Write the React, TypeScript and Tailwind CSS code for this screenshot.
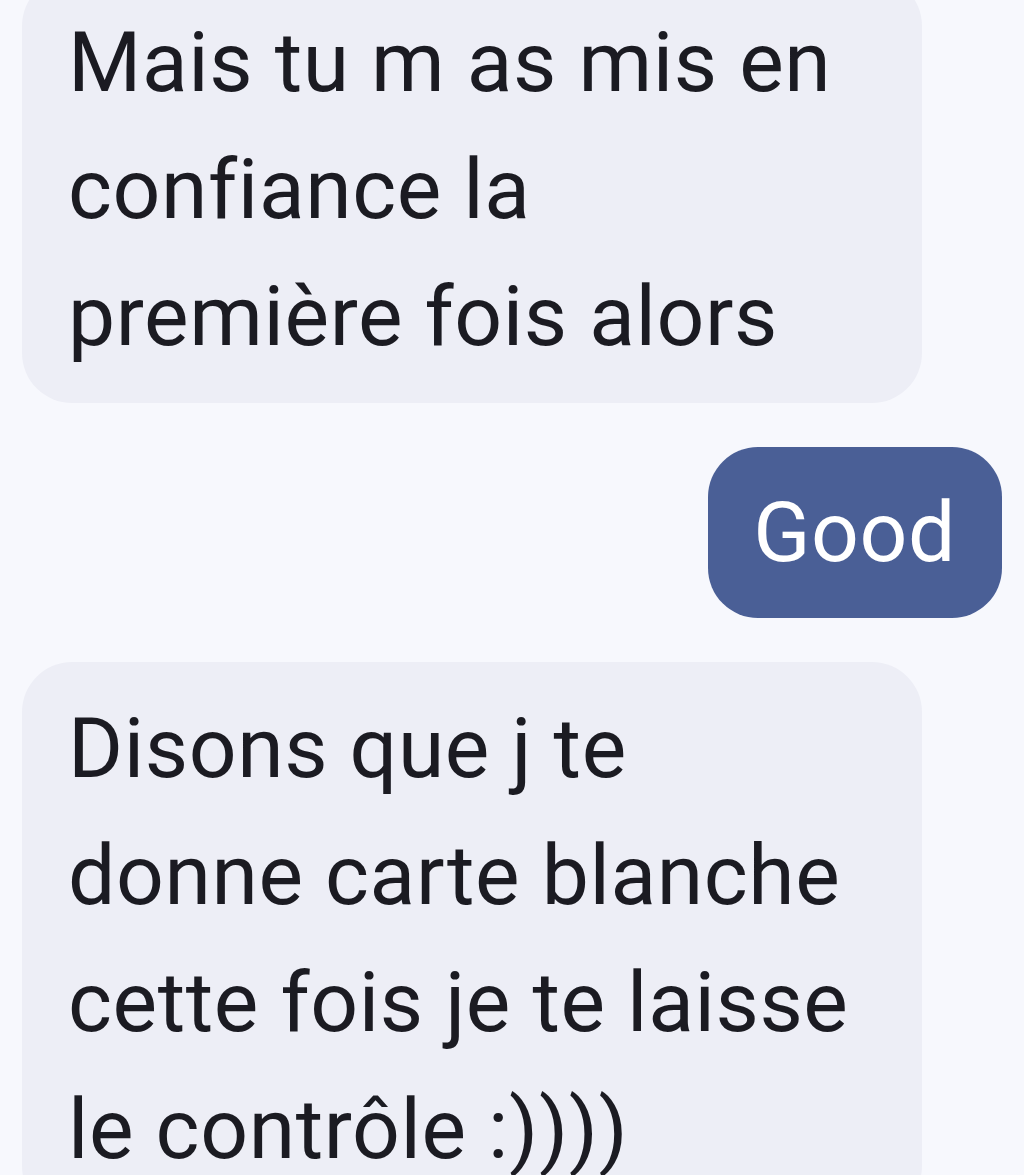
import React from 'react';

interface IBubbleProps {
    lines: string[];
    mine?: boolean;
}

function Bubble({ lines, mine }: Readonly<IBubbleProps>) {
    if (mine) {
        return (
            <div className="flex justify-end">
                <div className="rounded-[50px] bg-[#4a5f96] pl-[45px] pr-[46px] py-[22px] text-white">
                    {lines.map((l) => (
                        <div key={l}>{l}</div>
                    ))}
                </div>
            </div>
        );
    }
    return (
        <div className="flex justify-start">
            <div className="w-[900px] rounded-[50px] bg-[#edeef6] px-[46px] py-[23px] text-[#1b1b22]">
                {lines.map((l) => (
                    <div key={l}>{l}</div>
                ))}
            </div>
        </div>
    );
}

export default function App() {
    return (
        <div
            className="h-[1175px] overflow-hidden bg-[#f7f8fd] px-[22px] text-[84px] leading-[127px] tracking-[0.6px]"
            style={{ fontFamily: 'Roboto, "Noto Sans", sans-serif' }}
        >
            <div className="-mt-[24px] flex flex-col gap-[44px]">
                <Bubble lines={['Mais tu m as mis en', 'confiance la', 'première fois alors']} />
                <Bubble mine lines={['Good']} />
                <Bubble
                    lines={[
                        'Disons que j te',
                        'donne carte blanche',
                        'cette fois je te laisse',
                        'le contrôle :))))',
                    ]}
                />
            </div>
        </div>
    );
}
